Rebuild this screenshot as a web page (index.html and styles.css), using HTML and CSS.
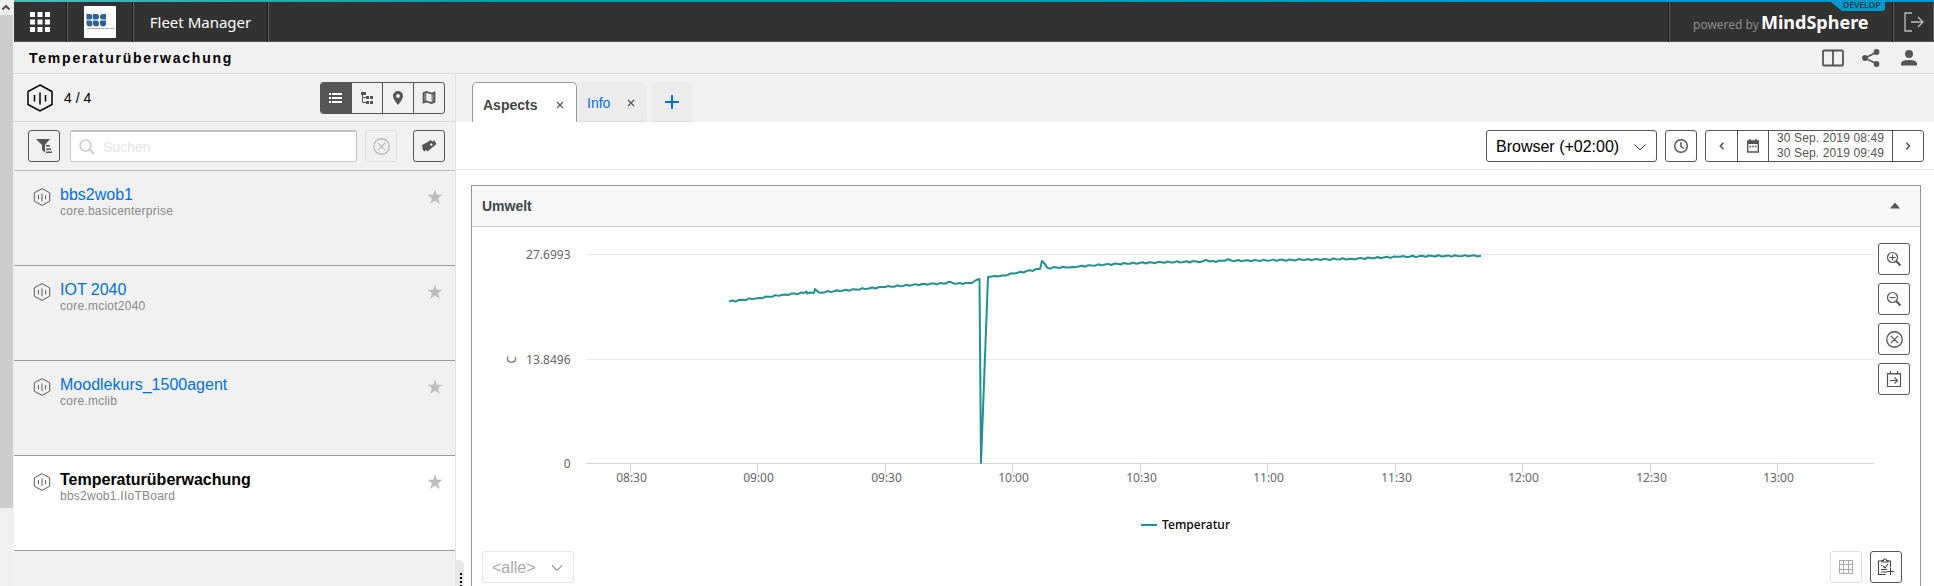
FILE: index.html
```
<!DOCTYPE html>
<html lang="de">
<head>
  <meta charset="UTF-8">
  <title>Fleet Manager</title>
  <link rel="stylesheet" href="styles.css">
</head>
<body>
  <svg class="defs" width="0" height="0">
    <symbol id="asset" viewBox="0 0 26 28">
      <path d="M13 1 L25 7.5 V20.500 L13 27 L1 20.500 V7.500 Z M13 8.500 V20.500 M7.500 11 V17.500 M18.500 11 V17.500" fill="none" stroke="currentColor" stroke-width="1.500"/>
    </symbol>
    <symbol id="star" viewBox="0 0 16 16">
      <path d="M8 .2 L9.900 5.700 H15.600 L11.100 9.200 L12.800 15 L8 11.600 L3.200 15 L4.900 9.200 L.4 5.700 H6.100 Z" fill="#bebebe"/>
    </symbol>
    <symbol id="close-circle" viewBox="0 0 16 16">
      <path d="M15.300 8 A7.300 7.300 0 1 1 .7 8 A7.300 7.300 0 1 1 15.300 8 M4.600 4.600 L11.400 11.400 M11.400 4.600 L4.600 11.400" fill="none" stroke="currentColor" stroke-width="1.200"/>
    </symbol>
  </svg>

  <div class="scrollbar">
    <svg width="13" height="15"><path d="M2.500 9.500 L6 6 L9.500 9.500" fill="none" stroke="#505050" stroke-width="2"/></svg>
    <div class="thumb"></div>
  </div>

  <div class="app">
    <header class="topbar">
      <div class="cell apps">
        <svg width="20" height="20" fill="#fff"><path d="M0 0h5v5H0zM7.500 0h5v5h-5zM15 0h5v5h-5zM0 7.500h5v5H0zM7.500 7.500h5v5h-5zM15 7.500h5v5h-5zM0 15h5v5H0zM7.500 15h5v5h-5zM15 15h5v5h-5z"/></svg>
      </div>
      <div class="cell logo">
        <svg width="32" height="32">
          <rect width="32" height="32" fill="#fff"/>
          <g fill="#2a6496">
            <path d="M2.500 8h3.500q2.500 0 2.500 2.800t-2.500 2.800H2.500zM9 8h3.500q2.500 0 2.500 2.800t-2.500 2.800H9zM22 8v5.600h-3q-3 0-3-2.800t3-2.800z"/>
            <path d="M2.500 14.500h3.500q2.500 0 2.500 3t-2.500 3q-3.500 0-3.500-3zM9 14.500h3.500q2.500 0 2.500 3t-2.500 3q-3.500 0-3.500-3zM16 14.500h6v3q0 3-3 3t-3-3z"/>
          </g>
          <path d="M3 22.500h28" stroke="#aaa" stroke-dasharray="4 .5"/>
        </svg>
      </div>
      <div class="cell app-name">Fleet Manager</div>
      <div class="fill"></div>
      <div class="cell brand"><span class="powered">powered by</span><strong>MindSphere</strong><span class="badge">DEVELOP</span></div>
      <div class="cell logout">
        <svg width="20" height="20" fill="none" stroke="#bebebe" stroke-width="1.300"><path d="M8 1H1v18h7M7 10h12M14 5l5 5l-5 5"/></svg>
      </div>
    </header>

    <div class="titlebar">
      <h1>Temperaturüberwachung</h1>
      <svg width="22" height="18" fill="none" stroke="#555" stroke-width="1.800"><rect x="1" y="1.500" width="20" height="15" rx="1"/><path d="M11 1v15"/></svg>
      <svg class="share" width="18" height="18"><path d="M15 3L3 9l12 6" fill="none" stroke="#555" stroke-width="1.700"/><g fill="#555"><circle cx="14.500" cy="3" r="2.900"/><circle cx="3" cy="9" r="2.900"/><circle cx="14.500" cy="15" r="2.900"/></g></svg>
      <svg width="16" height="16" fill="#555"><circle cx="8" cy="4" r="4"/><path d="M0 15.500v-2q0-3.500 8-3.500t8 3.500v2z"/></svg>
    </div>

    <div class="main">
      <aside class="sidebar">
        <div class="side-head">
          <svg class="big-asset" width="28" height="28"><use href="#asset"/></svg>
          <span class="count">4 / 4</span>
          <div class="views">
            <span class="active"><svg width="14" height="12" fill="#fff"><path d="M0 1h2v2H0zM3 1h10v2H3zM0 5h2v2H0zM3 5h10v2H3zM0 9h2v2H0zM3 9h10v2H3z"/></svg></span>
            <span><svg width="14" height="14" fill="#555"><path d="M1 1h5v3H1zM6 5h3v3H6zM10 5h3v3h-3zM6 10h3v3H6zM10 10h3v3h-3z"/><path d="M2.500 4v7.500H6M2.500 6.500H6" fill="none" stroke="#555"/></svg></span>
            <span><svg width="12" height="14" fill="#555"><path fill-rule="evenodd" d="M6 0a5 5 0 0 1 5 5q0 3-5 9Q1 8 1 5a5 5 0 0 1 5-5M6 3a2 2 0 1 0 .01 0z"/></svg></span>
            <span><svg width="14" height="13"><path d="M1.500 2l3-1l5 1.500l3-1v9.500l-3 1l-5-1.500l-3 1z" fill="none" stroke="#555" stroke-width="1.700"/><path d="M1 2l3.500-1v10L1 12zM9.500 2.500L13 1.500v9.500l-3.500 1z" fill="#555" opacity=".65"/></svg></span>
          </div>
        </div>
        <div class="search-row">
          <button class="btn"><svg width="16" height="16" fill="#555"><path d="M0 1h14L9 7v7.500L6 12V7zM10 7h4v1.500h-4zM10 10.500h5V12h-5zM10 13.500h6V15h-6z"/></svg></button>
          <div class="search">
            <svg width="16" height="16" fill="none" stroke="#ccc"><circle cx="6.500" cy="6.500" r="5.500" stroke-width="1.500"/><path d="M10.500 10.500L15 15" stroke-width="2"/></svg>
            <span>Suchen</span>
          </div>
          <button class="btn off clear"><svg width="17" height="17"><use href="#close-circle"/></svg></button>
          <button class="btn"><svg width="16" height="16"><path d="M.5 7.500L10 2l1.200 1.500l2-1.300l2.300 3.800L6.500 13.500l-1.300-1.500l-2 1.500L1 10.500l1-1z" fill="#555"/><path d="M8.800 6.200l1.800-1l1.300 1.900l-1.800 1z" fill="#fff"/></svg></button>
        </div>
        <div class="item">
          <svg width="18" height="18"><use href="#asset"/></svg>
          <div class="names"><a>bbs2wob1</a><small>core.basicenterprise</small></div>
          <svg width="16" height="16"><use href="#star"/></svg>
        </div>
        <div class="item">
          <svg width="18" height="18"><use href="#asset"/></svg>
          <div class="names"><a>IOT 2040</a><small>core.mciot2040</small></div>
          <svg width="16" height="16"><use href="#star"/></svg>
        </div>
        <div class="item">
          <svg width="18" height="18"><use href="#asset"/></svg>
          <div class="names"><a>Moodlekurs_1500agent</a><small>core.mclib</small></div>
          <svg width="16" height="16"><use href="#star"/></svg>
        </div>
        <div class="item selected">
          <svg width="18" height="18"><use href="#asset"/></svg>
          <div class="names"><a>Temperaturüberwachung</a><small>bbs2wob1.IIoTBoard</small></div>
          <svg width="16" height="16"><use href="#star"/></svg>
        </div>
        <div class="handle"><i></i></div>
      </aside>

      <section class="content">
        <nav class="tabs">
          <div class="tab current">Aspects <svg width="8" height="8"><path d="M1 1l6 6M7 1l-6 6" stroke="#555" stroke-width="1.200"/></svg></div>
          <div class="tab">Info <svg width="8" height="8"><path d="M1 1l6 6M7 1l-6 6" stroke="#555" stroke-width="1.200"/></svg></div>
          <div class="tab add"><svg width="14" height="14"><path d="M7 0v14M0 7h14" stroke="#006fe6" stroke-width="2"/></svg></div>
        </nav>

        <div class="toolbar">
          <div class="select zone"><span>Browser (+02:00)</span><svg width="12" height="8"><path d="M.5 1.500L6 7L11.500 1.500" fill="none" stroke="#333"/></svg></div>
          <button class="btn"><svg width="16" height="16" fill="none" stroke="#555" stroke-width="1.500"><circle cx="8" cy="8" r="6.300"/><path d="M8 4v4.500l3 2"/></svg></button>
          <div class="range">
            <span class="step"><svg width="6" height="8"><path d="M4.500 .8L1.300 4l3.200 3.200" fill="none" stroke="#555" stroke-width="1.600"/></svg></span>
            <span class="cal"><svg width="12" height="14"><path d="M3 0v3M9 0v3" stroke="#555" stroke-width="1.600"/><path d="M.7 2h10.600v11H.7z" fill="none" stroke="#555" stroke-width="1.400"/><path d="M.7 2h10.600v3H.7z" fill="#555"/><path d="M2.500 7.500h8" stroke="#555" stroke-width="1.500" stroke-dasharray="1.700 1"/></svg></span>
            <span class="dates">30 Sep. 2019 08:49<br>30 Sep. 2019 09:49</span>
            <span class="step"><svg width="6" height="8"><path d="M1.300 .8L4.500 4l-3.200 3.200" fill="none" stroke="#555" stroke-width="1.600"/></svg></span>
          </div>
        </div>

        <div class="panel">
          <div class="panel-head"><h2>Umwelt</h2><svg width="10" height="6"><path d="M0 5.500L4.500 0h1L10 5.500z" fill="#555"/></svg></div>
          <div class="panel-body">
            <svg class="chart" id="chart" width="1402" height="324"></svg>
            <div class="tools">
              <button class="btn"><svg width="16" height="16" fill="none" stroke="#555"><circle cx="6.500" cy="6.500" r="5" stroke-width="1.200"/><path d="M6.500 3.500v6M3.500 6.500h6"/><path d="M10 10l4.500 4.500" stroke-width="2"/></svg></button>
              <button class="btn"><svg width="16" height="16" fill="none" stroke="#555"><circle cx="6.500" cy="6.500" r="5" stroke-width="1.200"/><path d="M3.500 6.500h6"/><path d="M10 10l4.500 4.500" stroke-width="2"/></svg></button>
              <button class="btn"><svg width="17" height="17"><use href="#close-circle"/></svg></button>
              <button class="btn"><svg width="16" height="18" fill="none" stroke="#555" stroke-width="1.200"><path d="M1.500 3.500h13v13h-13zM1.500 4h13M4.500 1v3M11.500 1v3M4 10.500h7.500M8.500 7.500l3 3l-3 3"/></svg></button>
            </div>
          </div>
          <div class="panel-foot">
            <div class="select off"><span>&lt;alle&gt;</span><svg width="12" height="8"><path d="M1 1.500l5 5l5-5" fill="none" stroke="#999" stroke-width="1.100"/></svg></div>
            <div class="fill"></div>
            <button class="btn off"><svg width="14" height="14" fill="none" stroke="#aaa"><path d="M.5.5h13v13H.5zM.5 4.500h13M.5 9.500h13M4.500 .5v13M9.500.5v13"/></svg></button>
            <button class="btn"><svg width="18" height="18" fill="none" stroke="#444" stroke-width="1.100"><path d="M4.500 3h-3v13.500h7M11 3h2.500v6.500M5 4V2.500h1.500q0-1.500 1.500-1.500t1.500 1.500H11V4zM4 7.500h1M6 8l2 2l3-4M4 11.500h6M4 14h6M13.500 10v7M10 13.500h7"/></svg></button>
          </div>
        </div>
      </section>
    </div>
  </div>

  <script>
    const left = 114, right = 1402, bottom = 236.5;
    let out = "";

    [[27.5, "27.6993"], [132.5, "13.8496"]].forEach(([y, label]) => {
      out += `<path class="grid" d="M${left} ${y}H${right}"/><text class="label" x="98.500" y="${y + 4}" text-anchor="end">${label}</text>`;
    });
    out += `<text class="label" x="98.500" y="240.500" text-anchor="end">0</text>`;
    out += `<text class="label" transform="translate(44 136.500) rotate(-90)">C</text>`;

    ["08:30", "09:00", "09:30", "10:00", "10:30", "11:00", "11:30", "12:00", "12:30", "13:00"].forEach((t, i) => {
      const x = Math.floor(158.4 + i * 127.45) + 0.5;
      out += `<path class="axis" d="M${x} ${bottom}v9"/><text class="label" x="${x + 1}" y="255" text-anchor="middle">${t}</text>`;
    });
    out += `<path class="axis" d="M${left} ${bottom}H${right}"/>`;

    // key readings, small sensor noise is added in between
    const points = [[257, 74.5], [287, 71], [313, 67.5], [332, 66], [334.5, 64.5], [335, 66.5], [342, 66], [343, 62], [347, 65.5],
      [371, 63.5], [413, 60], [453, 57], [474, 56.5], [476, 55], [485, 56.5], [500, 56], [507.5, 52], [509, 236], [516, 50], [530, 48.5],
      [542, 46.5], [567, 42], [568, 42], [570, 34], [575.5, 41], [600, 40], [633, 37.5], [680, 35.5], [730, 34.5], [734, 33],
      [738, 34.5], [753, 33.8], [756, 32.2], [760, 33.8], [830, 32.8], [880, 31.8], [928, 29.8], [960, 29], [1009, 28.7]];
    let line = `M${points[0]}`;
    for (let i = 1; i < points.length; i++) {
      const [x0, y0] = points[i - 1], [x1, y1] = points[i];
      const n = Math.round((x1 - x0) / 3.2);
      for (let k = 1; k < n; k++) {
        const x = x0 + (x1 - x0) * k / n;
        const y = y0 + (y1 - y0) * k / n;
        if (Math.abs(y1 - y0) < 10) line += `L${x.toFixed(1)} ${(y + Math.sin(x * 0.72) * 0.75).toFixed(1)}`;
      }
      line += `L${x1} ${y1}`;
    }
    out += `<path class="series" d="${line}"/>`;
    out += `<path class="series" d="M669 298h16"/><text class="legend" x="690" y="302" textLength="68">Temperatur</text>`;
    document.getElementById("chart").innerHTML = out;
  </script>
</body>
</html>
```
FILE: styles.css
```
* { box-sizing: border-box; }
body { margin: 0; display: flex; height: 586px; overflow: hidden; background: #fff; color: #000; font: 14px "Liberation Sans", Arial, sans-serif; }
svg { display: block; flex: none; }
.defs { position: absolute; }
.fill { flex: 1; }

.scrollbar { width: 14px; flex: none; background: #f0f0f0; }
.thumb { width: 13px; height: 493px; background: #cdcdcd; }
.app { flex: 1; min-width: 0; display: flex; flex-direction: column; }

.topbar { display: flex; height: 42px; flex: none; background: #323232; border-top: 2px solid; border-image: linear-gradient(90deg, #50b9bc, #00a0a4 25%, #009fb0 55%, #0099cb 80%) 2 0 0 0; font-family: "Noto Sans", sans-serif; color: #fff; box-shadow: inset 0 -1px #555; }
.cell { display: flex; align-items: center; justify-content: center; border-left: 1px solid #606060; border-right: 1px solid #1a1a1a; }
.apps { width: 53px; border-left: 0; }
.logo { width: 66px; }
.app-name { width: 135px; font-size: 15px; }
.topbar > .fill { border-left: 1px solid #606060; border-right: 1px solid #1a1a1a; }
.brand { width: 224px; position: relative; justify-content: flex-start; padding-left: 23px; }
.powered { width: 69px; color: #8c8c8c; font-size: 12px; padding-top: 4px; white-space: nowrap; }
.brand strong { margin-left: -1px; font-size: 18px; line-height: 24px; }
.badge { position: absolute; top: 0; left: 161px; width: 54px; height: 9px; padding-left: 12px; background: #0099cb; clip-path: polygon(0 0, 100% 0, 100% 85%, 96% 100%, 20% 100%); color: #1c3c4c; font-size: 8.5px; line-height: 5px; font-weight: 600; }
.logout { width: 41px; border-right-color: #606060; }

.titlebar { height: 32px; flex: none; display: flex; align-items: center; padding: 0 17px 0 15px; background: #f1f1f1; border-bottom: 1px solid #d9d9d9; }
.titlebar h1 { flex: 1; margin: 0; font-size: 14px; letter-spacing: 1.77px; }
.share { margin: 0 21px 0 18px; }

.main { flex: 1; display: flex; min-height: 0; }
.sidebar { width: 442px; flex: none; position: relative; background: #f1f1f1; border-right: 1px solid #e3e3e3; }
.side-head { height: 48px; display: flex; align-items: center; padding: 0 10px 0 12px; border-bottom: 1px solid #d5d5d5; }
.count { flex: 1; margin-left: 10px; }
.views { display: flex; width: 125px; height: 32px; border: 1px solid #555; border-radius: 3px; overflow: hidden; }
.views span { flex: 1; display: flex; align-items: center; justify-content: center; border-left: 1px solid #555; }
.views .active { background: #555; border: 0; }
.search-row { height: 49px; display: flex; align-items: center; padding: 0 10px 0 14px; border-bottom: 1px solid #bebebe; }
.btn { width: 32px; height: 32px; flex: none; display: flex; align-items: center; justify-content: center; padding: 0; background: none; border: 1px solid #555; border-radius: 3px; color: #555; }
.off.btn { border-color: #e0e0e0; color: #bbb; }
.search { display: flex; align-items: center; gap: 8px; width: 287px; height: 32px; margin-left: 10px; padding-left: 8px; border: 1px solid #c4c4c4; border-top-width: 2px; border-radius: 2px; background: #fff; color: #e6e6e6; }
.clear { margin: 0 16px 0 8px; }
.item { height: 95px; display: flex; padding: 16px 12px 0 19px; border-bottom: 1px solid #999; color: #555; }
.item > svg:first-child { margin-top: 1px; }
.item > svg:last-child { margin-top: 2px; }
.names { flex: 1; margin-left: 9px; margin-top: -1px; }
.names a { display: block; font-size: 16px; line-height: 18px; color: #006fe6; }
.names small { display: block; font-size: 12px; line-height: 14px; color: #888; letter-spacing: .25px; }
.item.selected { background: #fff; }
.selected a { color: #000; font-weight: bold; }
.names small { white-space: nowrap; }
.handle { position: absolute; left: 441px; bottom: 0; width: 9px; height: 26px; background: #e8e8e8; border-radius: 0 5px 0 0; }
.handle i { display: block; width: 2px; height: 13px; margin: 13px 0 0 5px; background: repeating-linear-gradient(#000 0 2px, transparent 2px 4px); }

.content { flex: 1; min-width: 0; }
.tabs { height: 48px; display: flex; align-items: flex-end; padding-left: 16px; background: #f1f1f1; }
.tab { height: 40px; display: flex; align-items: center; justify-content: space-between; width: 69px; padding: 3px 12px 0 9px; margin-left: 1px; background: #ececec; border-bottom: 1px solid #dcdcdc; border-radius: 4px; color: #006fe6; }
.tab.current { width: 105px; margin: 0; padding: 5px 12px 0 10px; background: #fff; border: 1px solid #999; border-bottom: 0; border-radius: 5px 5px 0 0; color: #444; font-weight: bold; }
.tab.add { width: 40px; margin-left: 5px; padding: 0; justify-content: center; border-radius: 4px 4px 0 0; }

.toolbar { height: 48px; display: flex; align-items: center; justify-content: flex-end; gap: 8px; padding-right: 10px; border-bottom: 1px solid #e6e6e6; }
.select { height: 32px; display: flex; align-items: center; justify-content: space-between; padding: 2px 10px 0 9px; border: 1px solid #555; border-radius: 3px; font-size: 16px; }
.zone { width: 171px; }
.select.off { width: 92px; border-color: #e6e6e6; color: #aaa; }
.range { display: flex; height: 32px; border: 1px solid #555; border-radius: 3px; color: #555; }
.range span { display: flex; align-items: center; justify-content: center; width: 31px; }
.range span + span { border-left: 1px solid #555; }
.range .dates { display: block; width: 124px; padding-left: 8px; font-size: 12px; line-height: 15px; letter-spacing: .13px; white-space: nowrap; }

.panel { width: 1450px; height: 420px; margin: 15px 0 0 15px; border: 1px solid #999; }
.panel-head { height: 41px; display: flex; align-items: center; justify-content: space-between; padding: 0 20px 0 10px; background: #f8f8f8; border-bottom: 1px solid #ccc; }
.panel-head h2 { margin: 0; font-size: 14px; color: #3c464b; }
.panel-body { display: flex; height: 324px; }
.tools { display: flex; flex-direction: column; gap: 8px; padding: 16px 0 0 4px; }
.panel-foot { display: flex; gap: 8px; padding: 0 18px 0 10px; }
.panel-foot .fill { margin-right: -8px; }

.chart { font-family: "Noto Sans", sans-serif; font-size: 12px; }
.grid { stroke: #e6e6e6; fill: none; }
.axis { stroke: #ccd6eb; fill: none; }
.label { fill: #666; }
.legend { fill: #000; font-weight: 500; }
.series { fill: none; stroke: #239094; stroke-width: 2; stroke-linejoin: round; }
```
